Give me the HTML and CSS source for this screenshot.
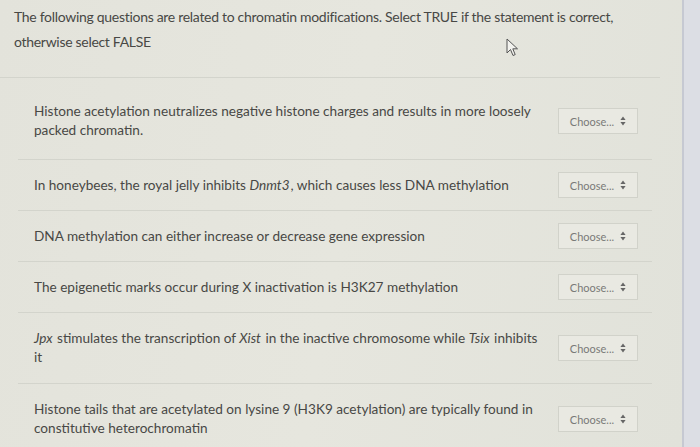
FILE: index.html
```html
<!DOCTYPE html>
<html lang="en">
<head>
  <meta charset="UTF-8" />
  <title>Chromatin modifications</title>
  <link rel="stylesheet" href="styles.css">
</head>
<body>
  <div class="panel">
    <div class="question">
      The following questions are related to chromatin modifications. Select TRUE if the statement is correct,
      otherwise select FALSE
    </div>

    <div class="match">
      <div class="row first">
        <div class="stem">Histone acetylation neutralizes negative histone charges and results in more loosely packed chromatin.</div>
        <div class="choose">Choose... <svg viewBox="0 0 6 10" width="6" height="10"><path d="M3 0.5 L5.6 4 H0.4 Z M3 9.5 L5.6 6 H0.4 Z" fill="#666"/></svg></div>
      </div>
      <div class="row">
        <div class="stem">In honeybees, the royal jelly inhibits <i>Dnmt3</i>, which causes less DNA methylation</div>
        <div class="choose">Choose... <svg viewBox="0 0 6 10" width="6" height="10"><path d="M3 0.5 L5.6 4 H0.4 Z M3 9.5 L5.6 6 H0.4 Z" fill="#666"/></svg></div>
      </div>
      <div class="row">
        <div class="stem">DNA methylation can either increase or decrease gene expression</div>
        <div class="choose">Choose... <svg viewBox="0 0 6 10" width="6" height="10"><path d="M3 0.5 L5.6 4 H0.4 Z M3 9.5 L5.6 6 H0.4 Z" fill="#666"/></svg></div>
      </div>
      <div class="row">
        <div class="stem">The epigenetic marks occur during X inactivation is H3K27 methylation</div>
        <div class="choose">Choose... <svg viewBox="0 0 6 10" width="6" height="10"><path d="M3 0.5 L5.6 4 H0.4 Z M3 9.5 L5.6 6 H0.4 Z" fill="#666"/></svg></div>
      </div>
      <div class="row double">
        <div class="stem"><i>Jpx</i> stimulates the transcription of <i>Xist</i> in the inactive chromosome while <i>Tsix</i> inhibits<br>it</div>
        <div class="choose">Choose... <svg viewBox="0 0 6 10" width="6" height="10"><path d="M3 0.5 L5.6 4 H0.4 Z M3 9.5 L5.6 6 H0.4 Z" fill="#666"/></svg></div>
      </div>
      <div class="row double">
        <div class="stem">Histone tails that are acetylated on lysine 9 (H3K9 acetylation) are typically found in constitutive heterochromatin</div>
        <div class="choose">Choose... <svg viewBox="0 0 6 10" width="6" height="10"><path d="M3 0.5 L5.6 4 H0.4 Z M3 9.5 L5.6 6 H0.4 Z" fill="#666"/></svg></div>
      </div>
    </div>

    <!-- mouse pointer -->
    <svg class="pointer" viewBox="0 0 14 20" width="14" height="20">
      <path d="M1 1 L1 15 L4.5 11.5 L7 17.5 L9.2 16.6 L6.8 10.8 L11.5 10.8 Z" fill="#f2f2ee" stroke="#555" stroke-width="1"/>
    </svg>
  </div>
</body>
</html>
```

FILE: styles.css
```css
body {
  margin: 0;
  background: #dcdee4;
  font-family: Lato, "Open Sans", sans-serif;
  color: #484845;
  overflow: hidden;
}
.panel {
  position: relative;
  width: 682px;
  height: 447px;
  background: linear-gradient(100deg, #e3e3db 0%, #e6e6de 50%, #e1e2da 100%);
  border-right: 2px solid #c6c9d2;
}
.question {
  font-size: 14px;
  letter-spacing: -0.3px;
  line-height: 25px;
  padding: 4px 20px 23px 14px;
  border-bottom: 1px solid #d3d4cc;
  margin-right: 22px;
}
.match {
  margin: 0 30px 0 18px;
}
.row {
  display: flex;
  align-items: center;
  justify-content: space-between;
  border-top: 1px solid #d3d4cc;
  padding: 12px 14px 12px 16px;
  font-size: 13.6px;
  line-height: 19px;
}
.row.first {
  border-top: none;
  padding-top: 24px;
  padding-bottom: 19px;
}
.row.double {
  padding-top: 16px;
  padding-bottom: 16px;
}
.stem {
  width: 510px;
}
.stem i {
  padding-right: 1px;
}
.choose {
  width: 80px;
  height: 26px;
  box-sizing: border-box;
  border: 1px solid #d1d2ca;
  background: #e9e9e2;
  font-size: 11px;
  color: #7a7a78;
  display: flex;
  align-items: center;
  justify-content: center;
  gap: 6px;
}
.pointer {
  position: absolute;
  left: 506px;
  top: 38px;
}
```
